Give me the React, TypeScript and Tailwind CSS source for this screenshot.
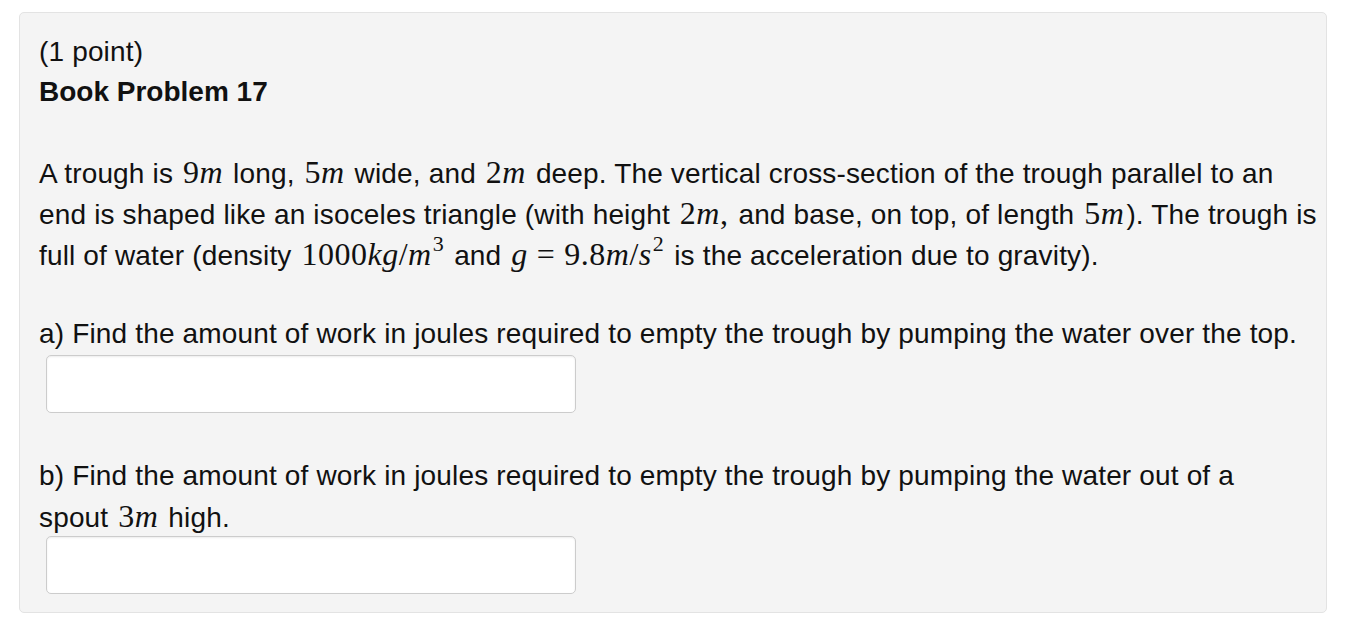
import React from 'react';

const M: React.FC<{ children: React.ReactNode }> = ({ children }) => (
  <span className="font-['Liberation_Serif',serif] text-[32px] tracking-[0.5px] mx-[2px]">{children}</span>
);

const I: React.FC<{ children: React.ReactNode }> = ({ children }) => <i>{children}</i>;

const Sup: React.FC<{ children: React.ReactNode }> = ({ children }) => (
  <sup className="text-[22px] -top-[14px] ml-[1px]">{children}</sup>
);

const AnswerBox: React.FC = () => (
  <input
    type="text"
    className="block ml-[7px] w-[530px] h-[58px] bg-white border border-[#cccccc] rounded-[5px] shadow-[inset_0_1px_2px_rgba(0,0,0,0.08)] outline-none"
  />
);

export default function App() {
  return (
    <div className="min-h-[630px] bg-white pt-[12px] pl-[19px] font-['Liberation_Sans',Arial,sans-serif] text-[28px] text-[#111] tracking-[0.16px]">
      <div className="w-[1308px] h-[601px] bg-[#f4f4f4] border border-[#e3e3e3] rounded-[5px] px-[19px] pt-[19px]">
        <div className="leading-[40px]">(1 point)</div>
        <div className="leading-[40px] font-bold tracking-normal">Book Problem 17</div>

        <div className="mt-[40px] leading-[41px] whitespace-nowrap">
          <div className="h-[41px]">
            A trough is <M>9<I>m</I></M> long, <M>5<I>m</I></M> wide, and <M>2<I>m</I></M> deep. The vertical
            cross-section of the trough parallel to an
          </div>
          <div className="h-[41px]">
            end is shaped like an isoceles triangle (with height <M>2<I>m</I>,</M> and base, on top, of length{' '}
            <M>5<I>m</I></M>). The trough is
          </div>
          <div className="h-[41px]">
            full of water (density{' '}
            <M>
              1000<I>kg</I>/<I>m</I>
              <Sup>3</Sup>
            </M>{' '}
            and{' '}
            <M>
              <I>g</I>
              <span className="mx-[9px]">=</span>9.8<I>m</I>/<I>s</I>
              <Sup>2</Sup>
            </M>{' '}
            is the acceleration due to gravity).
          </div>
        </div>

        <div className="mt-[39px] leading-[40px] whitespace-nowrap">
          a) Find the amount of work in joules required to empty the trough by pumping the water over the top.
        </div>
        <div className="mt-[1px]">
          <AnswerBox />
        </div>

        <div className="mt-[42px] leading-[41px] whitespace-nowrap">
          <div className="h-[41px]">
            b) Find the amount of work in joules required to empty the trough by pumping the water out of a
          </div>
          <div className="h-[41px]">
            spout <M>3<I>m</I></M> high.
          </div>
        </div>
        <div className="mt-[-1px]">
          <AnswerBox />
        </div>
      </div>
    </div>
  );
}
